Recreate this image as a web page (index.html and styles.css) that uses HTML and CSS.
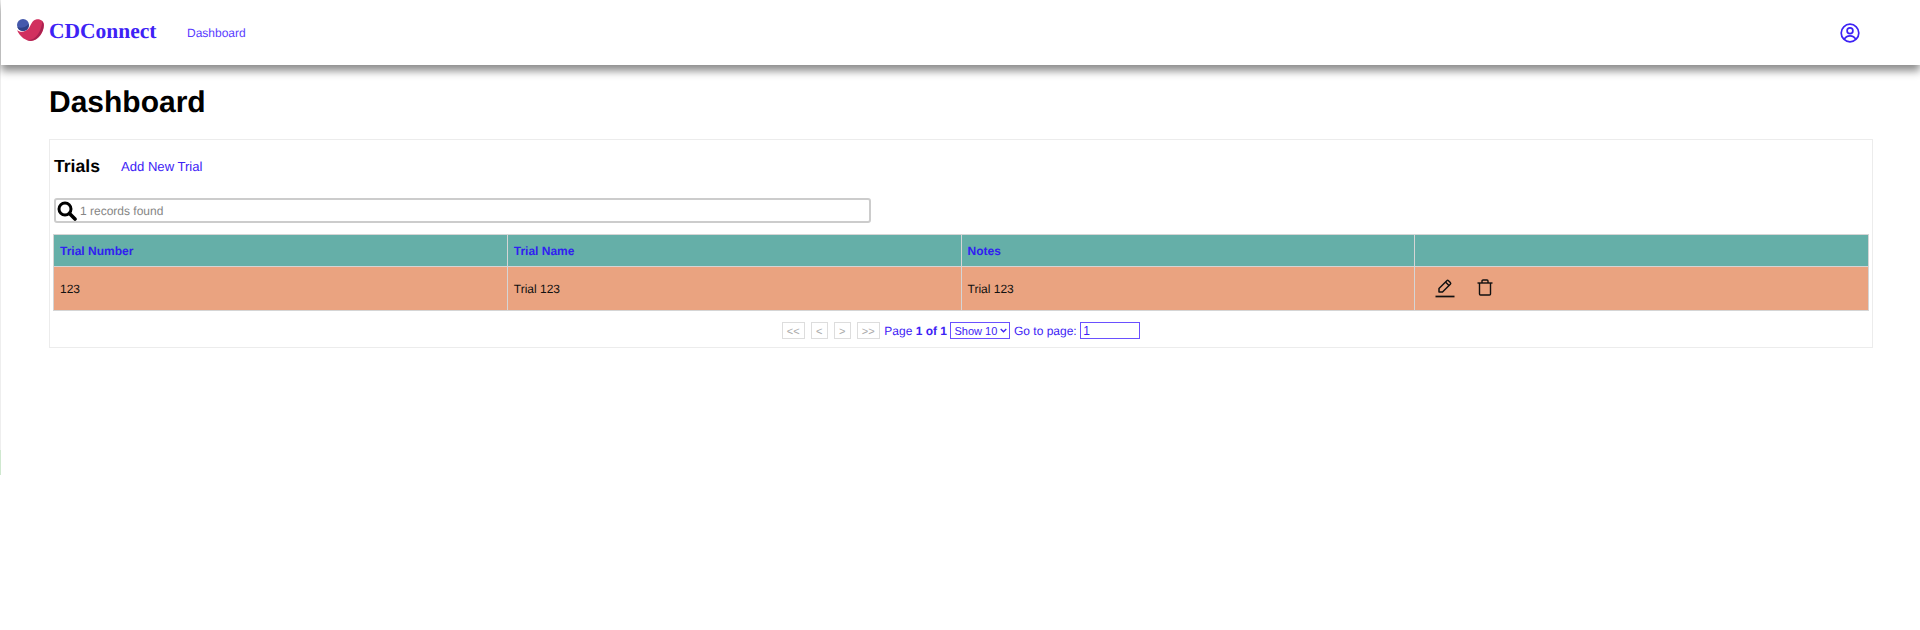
FILE: index.html
```html
<!DOCTYPE html>
<html lang="en">
<head>
<meta charset="utf-8">
<title>CDConnect</title>
<link rel="stylesheet" href="styles.css">
</head>
<body>
<div class="edge"></div>
<header class="topbar">
  <div class="brand">
    <svg class="logo" width="27" height="22" viewBox="0 0 27 22">
      <path d="M0 11C3 18 9 22 14 22C21 22 27 13 27 6C27 2 23 -.5 19 .5C15 1.500 14 6 12 9C9 13 3 14 0 11Z" fill="#d1305f"/>
      <path d="M10 21C18 22 24 14 25.500 2C28 6 26 14 21 18.500C17 22 13 22.500 10 21Z" fill="#a82250"/>
      <circle cx="6" cy="6" r="6" fill="#4559ac"/>
      <path d="M.3 8C3 9.500 8 9 11.800 5C12.500 9.500 9 12 6 12C3.500 12 1.200 10.500 .3 8Z" fill="#2f4187"/>
    </svg>
    <span class="brand-name">CDConnect</span>
  </div>
  <a class="nav-link">Dashboard</a>
  <svg class="user" width="20" height="20" viewBox="0 0 20 20" fill="none" stroke="#3d22f5" stroke-width="1.700">
    <circle cx="10" cy="10" r="8.800"/>
    <circle cx="10" cy="7.800" r="2.900"/>
    <path d="M4.300 16.200C5.500 13.800 7.500 12.800 10 12.800C12.500 12.800 14.500 13.800 15.700 16.200"/>
  </svg>
</header>
<main class="content">
  <h1 class="page-title">Dashboard</h1>
  <section class="card">
    <div class="card-head">
      <h2 class="card-title">Trials</h2>
      <a class="add-link">Add New Trial</a>
    </div>
    <div class="search">
      <svg width="20" height="20" viewBox="0 0 20 20" fill="none" stroke="#000">
        <circle cx="8" cy="8" r="6" stroke-width="3"/>
        <path d="M12.500 12.500L18 18" stroke-width="3.600" stroke-linecap="round"/>
      </svg>
      <span class="search-text">1 records found</span>
    </div>
    <table class="grid">
      <thead>
        <tr><th>Trial Number</th><th>Trial Name</th><th>Notes</th><th></th></tr>
      </thead>
      <tbody>
        <tr>
          <td>123</td><td>Trial 123</td><td>Trial 123</td>
          <td>
            <div class="actions">
              <svg width="20" height="20" viewBox="0 0 20 20" fill="none" stroke="#111" stroke-width="1.500">
                <path d="M4 14V10.500L11.800 2.700C12.300 2.200 13 2.200 13.500 2.700L15.300 4.500C15.800 5 15.800 5.700 15.300 6.200L7.500 14Z" stroke-linejoin="round"/>
                <path d="M10.500 4L14 7.500"/>
                <path d="M0.500 18.500H19.500" stroke-width="1.700"/>
              </svg>
              <svg width="16" height="17" viewBox="0 0 16 17" fill="none" stroke="#111" stroke-width="1.400">
                <path d="M0.500 4H15.500"/>
                <path d="M2.500 4V15C2.500 15.700 3 16 3.500 16H12.500C13 16 13.500 15.700 13.500 15V4"/>
                <path d="M5 4V2C5 1.300 5.500 1 6 1H10C10.500 1 11 1.300 11 2V4"/>
              </svg>
            </div>
          </td>
        </tr>
      </tbody>
    </table>
    <div class="pager">
      <div class="pg-buttons">
        <button class="pg-btn">&lt;&lt;</button>
        <button class="pg-btn">&lt;</button>
        <button class="pg-btn">&gt;</button>
        <button class="pg-btn">&gt;&gt;</button>
      </div>
      <span>Page <strong>1 of 1</strong></span>
      <div class="pg-select-wrap">
        <select class="pg-select"><option>Show 10</option></select>
        <svg class="pg-chevron" width="7" height="5" viewBox="0 0 7 5" fill="none" stroke="#3d22f5" stroke-width="1.300">
          <path d="M.7 1L3.500 3.800L6.300 1"/>
        </svg>
      </div>
      <span>Go to page:</span>
      <input class="pg-input" value="1">
    </div>
  </section>
</main>
</body>
</html>
```
FILE: styles.css
```css
* { box-sizing: border-box; }
html, body { margin: 0; padding: 0; }
body {
  height: 630px;
  overflow: hidden;
  background: #fff;
  font-family: "Liberation Sans", Arial, sans-serif;
  color: #000;
  position: relative;
  text-rendering: geometricPrecision;
}
.edge {
  position: absolute;
  left: 0; top: 0;
  width: 1px; height: 475px;
  background: linear-gradient(#eee 0, #eee 450px, #cfe8cf 450px);
}
.topbar {
  height: 65px;
  margin-left: 1px;
  background: #fff;
  box-shadow: 0 6px 8px rgba(0,0,0,.45);
  display: flex;
  align-items: center;
  padding-left: 16px;
  padding-right: 40px;
  position: relative;
}
.brand { display: flex; align-items: center; width: 170px; }
.logo { margin-right: 5px; margin-top: -5px; flex: none; }
.brand-name {
  font-family: "Liberation Serif", serif;
  font-weight: 700;
  font-size: 21.500px;
  color: #3d22f5;
  margin-top: -2px;
}
.nav-link { font-size: 12px; color: #5a3cff; }
.user { margin-left: auto; margin-right: 20px; }
.content { padding: 0 47px 0 49px; }
.page-title {
  margin: 0;
  padding-top: 21px;
  font-size: 30px;
  line-height: 34px;
  font-weight: 700;
}
.card {
  margin-top: 19px;
  height: 209px;
  border: 1px solid #ececec;
  padding: 0 3px;
}
.card-head { display: flex; align-items: center; height: 52px; padding-left: 1px; }
.card-title { margin: 0; font-size: 17.600px; font-weight: 700; }
.add-link { margin-left: 21px; font-size: 13.100px; color: #3d22f5; }
.search {
  margin-top: 6px;
  margin-left: 1px;
  width: 817px;
  height: 25px;
  border: 2px solid #ccc;
  border-radius: 3px;
  display: flex;
  align-items: center;
  padding-left: 1px;
}
.search-text { margin-left: 3px; font-size: 12px; color: #858585; }
.grid {
  margin-top: 11px;
  width: 100%;
  border-collapse: collapse;
  table-layout: fixed;
  font-size: 12px;
}
.grid th, .grid td {
  text-align: left;
  padding: 0 6px;
  border: 1px solid #d5d5d5;
}
.grid th {
  height: 32px;
  background: #65afa8;
  color: #3020f0;
  font-weight: 700;
}
.grid td {
  height: 44px;
  background: #eaa380;
  color: #111;
}
.actions { display: flex; align-items: center; gap: 22px; padding-left: 14px; margin-top: -2px; }
.pager {
  display: flex;
  justify-content: center;
  align-items: center;
  gap: 3.500px;
  margin-top: 11px;
  font-size: 12px;
  color: #3d22f5;
}
.pg-buttons { display: flex; gap: 6px; margin-right: 1px; }
.pg-btn {
  height: 17px;
  padding: 0;
  min-width: 17px;
  border: 1px solid #ddd;
  background: #fff;
  color: #aaa;
  font-family: inherit;
  font-size: 11px;
}
.pg-btn:first-child, .pg-btn:last-child { width: 23px; }
.pg-select-wrap { position: relative; display: flex; }
.pg-select {
  appearance: none;
  width: 60px;
  height: 17px;
  padding: 0 0 0 3px;
  border: 1px solid #6a50ff;
  background: #fff;
  color: #3d22f5;
  font-family: inherit;
  font-size: 11px;
  border-radius: 0;
}
.pg-chevron { position: absolute; right: 3px; top: 6px; pointer-events: none; }
.pg-input {
  width: 60px;
  height: 17px;
  padding: 0 2px;
  border: 1px solid #6a50ff;
  color: #3d22f5;
  font-family: inherit;
  font-size: 12px;
}
```
